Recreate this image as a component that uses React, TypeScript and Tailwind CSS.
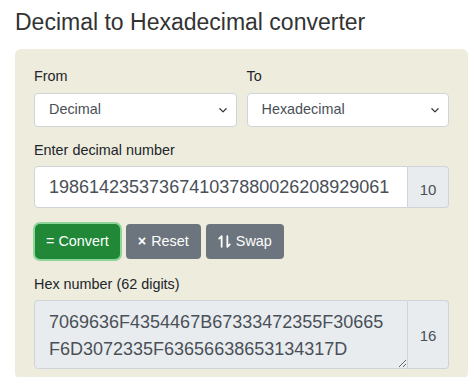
import React from 'react';

const font = { fontFamily: '"Liberation Sans", Arial, sans-serif' };

const Chevron = () => (
  <svg width="10" height="10" viewBox="0 0 16 16" fill="none" stroke="#343a40" strokeWidth="2" strokeLinecap="round" strokeLinejoin="round">
    <path d="M3 6l5 5 5-5" />
  </svg>
);

// up arrow on the left, down arrow on the right
const SwapIcon = () => (
  <svg width="13" height="13" viewBox="0 0 16 16" fill="none" stroke="currentColor" strokeWidth="2.2" strokeLinecap="round" strokeLinejoin="round">
    <path d="M4.5 14.5V1.5L1.5 4.5" />
    <path d="M11.5 1.5v13l3-3" />
  </svg>
);

const SelectBox = ({ value }: { value: string }) => (
  <div className="flex h-[34px] items-center justify-between rounded-[4px] border border-[#ced4da] bg-white pl-[14px] pr-[8px] text-[14.4px] text-[#495057]">
    <span>{value}</span>
    <Chevron />
  </div>
);

export default function App() {
  return (
    <div className="w-[474px] bg-white pt-[8px] text-[#212529]" style={font}>
      <h1 className="pl-[15px] text-[23px] leading-[28px] text-[#333]">Decimal to Hexadecimal converter</h1>

      <div className="ml-[15px] mr-[6px] mt-[13px] rounded-[6px] bg-[#eeecdd] px-[19px] pt-[17px] pb-[10px]">
        {/* From / To */}
        <div className="grid grid-cols-2 gap-[10px]">
          <div>
            <label className="block text-[14.4px] leading-[21.6px] mb-[5px]">From</label>
            <SelectBox value="Decimal" />
          </div>
          <div>
            <label className="block text-[14.4px] leading-[21.6px] mb-[5px]">To</label>
            <SelectBox value="Hexadecimal" />
          </div>
        </div>

        {/* Input */}
        <label className="mt-[13px] mb-[5px] block text-[14.4px] leading-[21.6px]">Enter decimal number</label>
        <div className="flex h-[42px]">
          <input
            readOnly
            value="1986142353736741037880026208929061"
            className="min-w-0 flex-1 rounded-l-[4px] border border-[#ced4da] bg-white px-[14px] text-[18px] text-[#495057] outline-none"
            style={font}
          />
          <div className="flex w-[41px] items-center justify-center rounded-r-[4px] border border-l-0 border-[#ced4da] bg-[#e9ecef] pt-[7px] text-[15px] text-[#495057]">
            10
          </div>
        </div>

        {/* Buttons */}
        <div className="mt-[16px] flex gap-[4px]">
          <button className="ml-[1px] h-[35px] rounded-[5px] bg-[#218838] px-[11px] text-[14.4px] text-white shadow-[0_0_0_2px_rgba(110,205,130,0.75)]">
            = Convert
          </button>
          <button className="ml-[2px] flex h-[35px] items-center gap-[5px] rounded-[4px] bg-[#6c757d] px-[12px] text-[14.4px] text-white">
            <span className="font-bold">×</span> Reset
          </button>
          <button className="ml-[1px] flex h-[35px] items-center gap-[5px] rounded-[4px] bg-[#6c757d] px-[12px] text-[14.4px] text-white">
            <SwapIcon /> Swap
          </button>
        </div>

        {/* Output */}
        <label className="mt-[15px] mb-[4px] block text-[14.4px] leading-[21.6px]">Hex number (62 digits)</label>
        <div className="flex h-[69px]">
          <textarea
            readOnly
            value="7069636F4354467B67333472355F30665F6D3072335F63656638653134317D"
            className="min-w-0 flex-1 resize-y break-all rounded-l-[4px] border border-[#ced4da] bg-[#e9ecef] px-[14px] pt-[8px] text-[18px] leading-[27px] text-[#495057] outline-none"
            style={font}
          />
          <div className="flex w-[41px] items-center justify-center rounded-r-[4px] border border-l-0 border-[#ced4da] bg-[#e9ecef] pt-[4px] text-[15px] text-[#495057]">
            16
          </div>
        </div>
      </div>
    </div>
  );
}
